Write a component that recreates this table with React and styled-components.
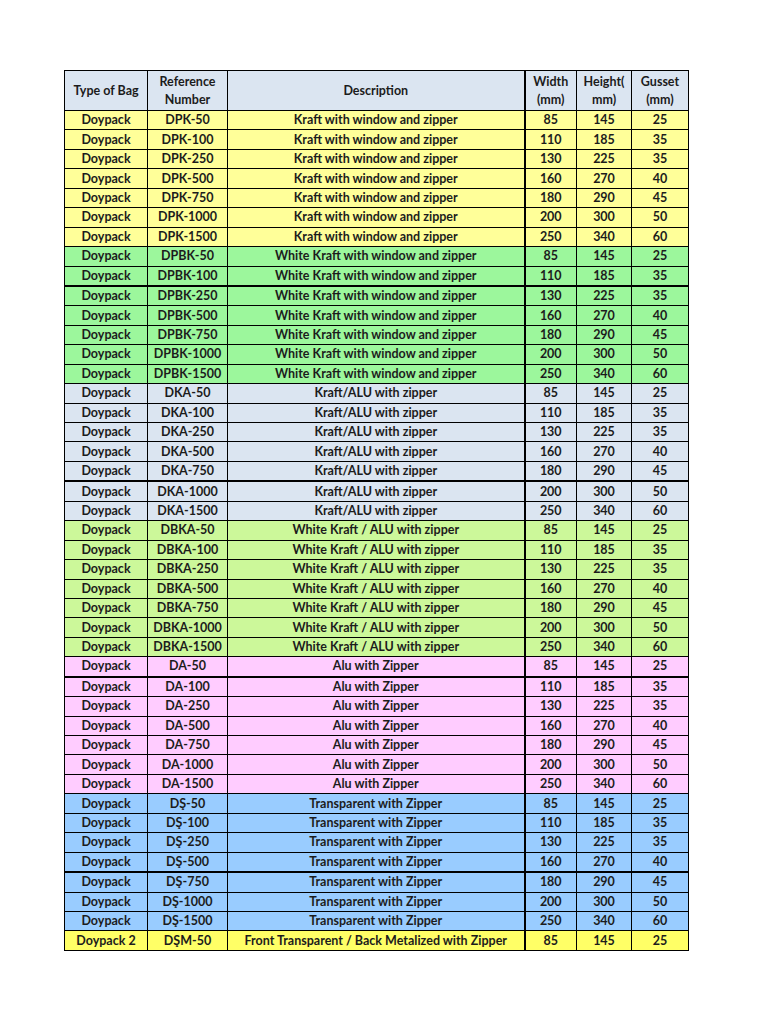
import styled, { createGlobalStyle, css } from "styled-components";

const GlobalStyle = createGlobalStyle`
  html, body {
    margin: 0;
    padding: 0;
    background: #ffffff;
  }
  body {
    font-family: Lato, "Liberation Sans", sans-serif;
  }
`;

const palette = {
  header: "#dbe5f1",
  kraft: "#ffff99",
  white: "#9cf79c",
  alu: "#dbe5f1",
  whiteAlu: "#ccf89a",
  pink: "#ffccff",
  clear: "#99ccff",
  metal: "#ffff66",
};

const sizes = [
  ["50", 85, 145, 25],
  ["100", 110, 185, 35],
  ["250", 130, 225, 35],
  ["500", 160, 270, 40],
  ["750", 180, 290, 45],
  ["1000", 200, 300, 50],
  ["1500", 250, 340, 60],
];

const groups = [
  { prefix: "DPK", desc: "Kraft with window and zipper", tone: "kraft" },
  { prefix: "DPBK", desc: "White Kraft with window and zipper", tone: "white" },
  { prefix: "DKA", desc: "Kraft/ALU with zipper", tone: "alu" },
  { prefix: "DBKA", desc: "White Kraft / ALU with zipper", tone: "whiteAlu" },
  { prefix: "DA", desc: "Alu with Zipper", tone: "pink" },
  { prefix: "DŞ", desc: "Transparent with Zipper", tone: "clear" },
];

const rows = [
  ...groups.flatMap((g) =>
    sizes.map(([n, w, h, gu]) => ({
      type: "Doypack",
      ref: `${g.prefix}-${n}`,
      desc: g.desc,
      w,
      h,
      gu,
      tone: g.tone,
    }))
  ),
  {
    type: "Doypack 2",
    ref: "DŞM-50",
    desc: "Front Transparent / Back Metalized with Zipper",
    w: 85,
    h: 145,
    gu: 25,
    tone: "metal",
  },
];

const Page = styled.div`
  padding: 70px 0 0 64px;
`;

const Table = styled.table`
  border-collapse: collapse;
  table-layout: fixed;
  width: 624px;
  color: #1c1c1c;
  font-size: 12.5px;
  font-weight: 700;
  border: 1.5px solid #000;
`;

const HeadCell = styled.th`
  background: ${palette.header};
  height: 39px;
  padding: 0;
  line-height: 18px;
  text-align: center;
  font-weight: 700;
  border: 1px solid #000;
  ${(p) => p.$split && css`border-right: 2px solid #000;`}
`;

const Row = styled.tr`
  background: ${(p) => palette[p.$tone]};
  ${(p) =>
    p.$thick &&
    css`
      & > td {
        border-top: 2px solid #000;
      }
    `}
`;

const Cell = styled.td`
  height: 18.45px;
  padding: 0;
  line-height: 18px;
  text-align: center;
  white-space: nowrap;
  border: 1px solid #000;
  ${(p) => p.$split && css`border-right: 2px solid #000;`}
`;

const widths = [83, 80, 297, 52, 55, 57];

export default function App() {
  return (
    <Page>
      <GlobalStyle />
      <Table>
        <colgroup>
          {widths.map((w, i) => (
            <col key={i} style={{ width: w }} />
          ))}
        </colgroup>
        <thead>
          <tr>
            <HeadCell>Type of Bag</HeadCell>
            <HeadCell>
              Reference
              <br />
              Number
            </HeadCell>
            <HeadCell $split>Description</HeadCell>
            <HeadCell>
              Width
              <br />
              (mm)
            </HeadCell>
            <HeadCell>
              Height(
              <br />
              mm)
            </HeadCell>
            <HeadCell>
              Gusset
              <br />
              (mm)
            </HeadCell>
          </tr>
        </thead>
        <tbody>
          {rows.map((r, i) => (
            <Row key={r.ref} $tone={r.tone} $thick={i > 0 && i % 10 === 9}>
              <Cell>{r.type}</Cell>
              <Cell>{r.ref}</Cell>
              <Cell $split>{r.desc}</Cell>
              <Cell>{r.w}</Cell>
              <Cell>{r.h}</Cell>
              <Cell>{r.gu}</Cell>
            </Row>
          ))}
        </tbody>
      </Table>
    </Page>
  );
}
